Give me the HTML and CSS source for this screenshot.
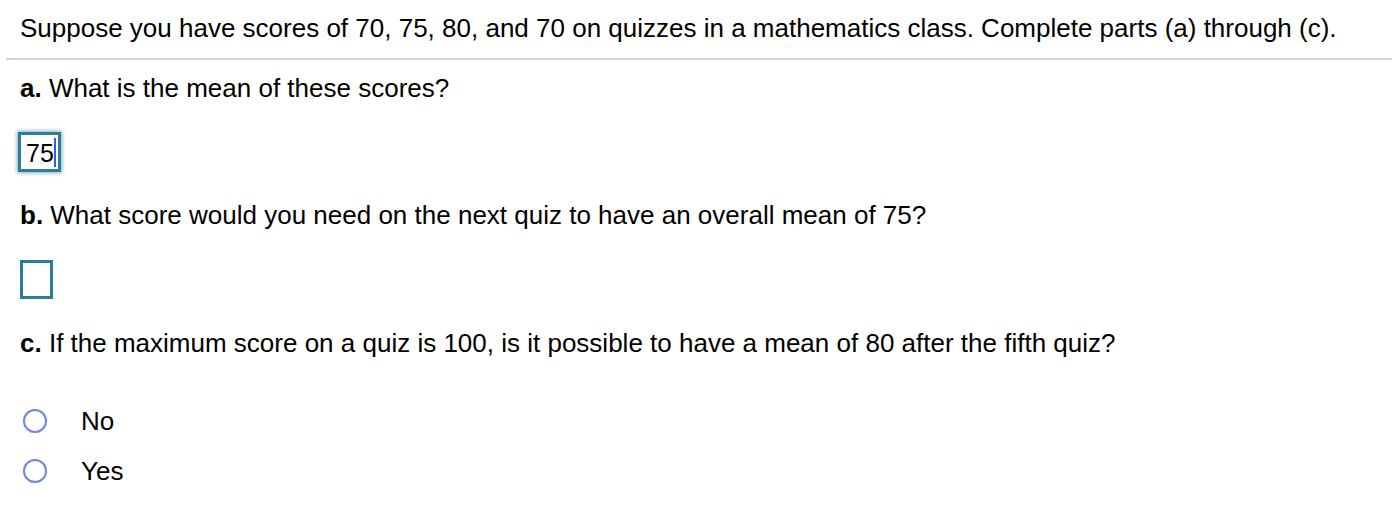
FILE: index.html
```html
<!DOCTYPE html>
<html>
<head>
<meta charset="utf-8">
<link rel="stylesheet" href="styles.css">
</head>
<body>
<div class="page">
  <div class="intro">Suppose you have scores of 70, 75, 80, and 70 on quizzes in a mathematics class. Complete parts (a) through (c).</div>
  <div class="rule"></div>
  <div class="part part-a">
    <p class="q"><b>a.</b> What is the mean of these scores?</p>
    <div class="answer"><span class="box focused">75<span class="caret"></span></span></div>
  </div>
  <div class="part part-b">
    <p class="q"><b>b.</b> What score would you need on the next quiz to have an overall mean of 75?</p>
    <div class="answer"><span class="box empty"></span></div>
  </div>
  <div class="part part-c">
    <p class="q"><b>c.</b> If the maximum score on a quiz is 100, is it possible to have a mean of 80 after the fifth quiz?</p>
    <div class="options">
      <label class="opt"><span class="radio"></span><span class="lbl">No</span></label>
      <label class="opt"><span class="radio"></span><span class="lbl">Yes</span></label>
    </div>
  </div>
</div>
</body>
</html>
```
FILE: styles.css
```css
html, body { margin: 0; padding: 0; background: #fff; }
body {
  font-family: "Liberation Sans", Arial, sans-serif;
  color: #000;
  font-size: 26px;
}
.page { padding: 0 0 0 6px; }
.intro {
  padding: 13px 0 0 14px;
  height: 45px;
  line-height: 30px;
}
.rule { height: 2px; background: #cfd3e0; }
.q { margin: 0; padding-left: 14px; line-height: 30px; }
.part-a { padding-top: 13px; }
.part-a .answer { padding: 29px 0 0 12px; height: 40px; }
.box {
  display: inline-block;
  box-sizing: border-box;
  border: 3px solid #2f7b9a;
  background: #fff;
  vertical-align: top;
}
.focused {
  width: 43px; height: 40px;
  padding: 3px 0 0 5px;
  line-height: 30px;
  font-size: 25px;
  box-shadow: 0 0 4px 1px rgba(47,123,154,0.6);
}
.caret {
  display: inline-block;
  width: 2px; height: 29px;
  background: #2f5fd8;
  vertical-align: top;
}
.part-b { padding-top: 28px; }
.part-b .answer { padding: 30px 0 0 14px; height: 39px; }
.empty { width: 33px; height: 39px; }
.part-c { padding-top: 29px; }
.options { padding: 38px 0 0 17px; }
.opt { display: flex; align-items: center; height: 50px; }
.radio {
  box-sizing: border-box;
  width: 24px; height: 24px;
  border: 2px solid #7189d8;
  border-radius: 50%;
  margin-right: 34px;
  box-shadow: 0 0 1px 0 rgba(113,137,216,0.6);
}
.lbl { line-height: 30px; }
```
